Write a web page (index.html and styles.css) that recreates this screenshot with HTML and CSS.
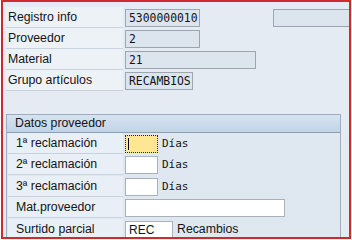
FILE: index.html
```html
<!DOCTYPE html>
<html lang="es">
<head>
<meta charset="UTF-8">
<title>Registro info</title>
<link rel="stylesheet" href="styles.css">
</head>
<body>
    <div class="frame">
        <!-- cabecera del registro -->
        <div class="row">
            <div class="lbl">Registro info</div>
            <div class="field ro w-reg">5300000010</div>
            <div class="field ro side"></div>
        </div>
        <div class="row">
            <div class="lbl">Proveedor</div>
            <div class="field ro w-reg">2</div>
        </div>
        <div class="row">
            <div class="lbl">Material</div>
            <div class="field ro w-mat">21</div>
        </div>
        <div class="row">
            <div class="lbl">Grupo artículos</div>
            <div class="field ro w-grp">RECAMBIOS</div>
        </div>

        <div class="group">
            <div class="ghead">Datos proveedor</div>
            <div class="grow">
                <div class="glbl">1ª reclamación</div>
                <div class="field edit w-small focus"><span class="caret"></span></div>
                <span class="unit">Días</span>
            </div>
            <div class="grow">
                <div class="glbl">2ª reclamación</div>
                <div class="field edit w-small"></div>
                <span class="unit">Días</span>
            </div>
            <div class="grow">
                <div class="glbl">3ª reclamación</div>
                <div class="field edit w-small"></div>
                <span class="unit">Días</span>
            </div>
            <div class="grow">
                <div class="glbl">Mat.proveedor</div>
                <div class="field edit w-matprov"></div>
            </div>
            <div class="grow">
                <div class="glbl">Surtido parcial</div>
                <div class="field edit w-rec sans">REC</div>
                <span class="desc">Recambios</span>
            </div>
        </div>
    </div>
</body>
</html>
```

FILE: styles.css
```css
body {
    margin: 0;
    background: #fff;
    font-family: "Liberation Sans", Arial, sans-serif;
    font-size: 12.3px;
    color: #141414;
}
.frame {
    box-sizing: border-box;
    margin-left: 1px;
    width: 350px;
    height: 239px;
    border: 2px solid #cf2a2e;
    background: #e4ebf3;
    padding: 5px 0 0 3px;
    overflow: hidden;
}
.row {
    display: flex;
    height: 21px;
}
.lbl {
    box-sizing: border-box;
    flex: none;
    width: 117px;
    height: 21px;
    padding-left: 2px;
    line-height: 20px;
    background: #edf2f7;
    border-bottom: 1px solid #c8d3de;
}
.field {
    box-sizing: border-box;
    flex: none;
    height: 18px;
    margin: 2px 0 0 2px;
    padding-left: 3px;
    border: 1px solid #9ca6b0;
    font-family: "DejaVu Sans Mono", monospace;
    font-size: 11.4px;
    line-height: 16px;
    white-space: nowrap;
}
.ro {
    background: #dce5ee;
}
.edit {
    background: #fff;
    border-color: #a9b1ba;
}
.w-reg { width: 75px; }
.w-mat { width: 131px; }
.w-grp { width: 68px; }
.side {
    margin-left: 73px;
    width: 90px;
}

/* grupo Datos proveedor */
.group {
    box-sizing: border-box;
    width: 335px;
    margin-top: 23px;
    height: 140px;
    border: 1px solid #9cadbf;
    border-bottom: none;
    background: #dfe8f1;
}
.ghead {
    height: 17px;
    line-height: 17px;
    padding-left: 8px;
    background: linear-gradient(#d6e3f0, #c1d4e8);
    border-bottom: 1px solid #8e9fb2;
}
.grow {
    display: flex;
    align-items: flex-start;
    height: 21.4px;
}
.glbl {
    box-sizing: border-box;
    flex: none;
    width: 115px;
    height: 21px;
    margin-left: 1px;
    padding-left: 8px;
    line-height: 21px;
    background: #e9eff6;
    border-bottom: 1px solid #c8d3de;
}
.w-small { width: 33px; }
.w-matprov { width: 160px; }
.w-rec { width: 48px; }
.focus {
    position: relative;
    background: #ffe692;
    border: 1px dotted #222;
}
.caret {
    position: absolute;
    left: 2px;
    top: 2px;
    width: 1px;
    height: 12px;
    background: #000;
}
.sans {
    font-family: "Liberation Sans", Arial, sans-serif;
    font-size: 12px;
    padding-left: 3px;
}
.unit {
    margin-left: 4px;
    font-family: "DejaVu Sans Mono", monospace;
    font-size: 11px;
    line-height: 21px;
}
.desc {
    margin-left: 4px;
    line-height: 21px;
}
```
